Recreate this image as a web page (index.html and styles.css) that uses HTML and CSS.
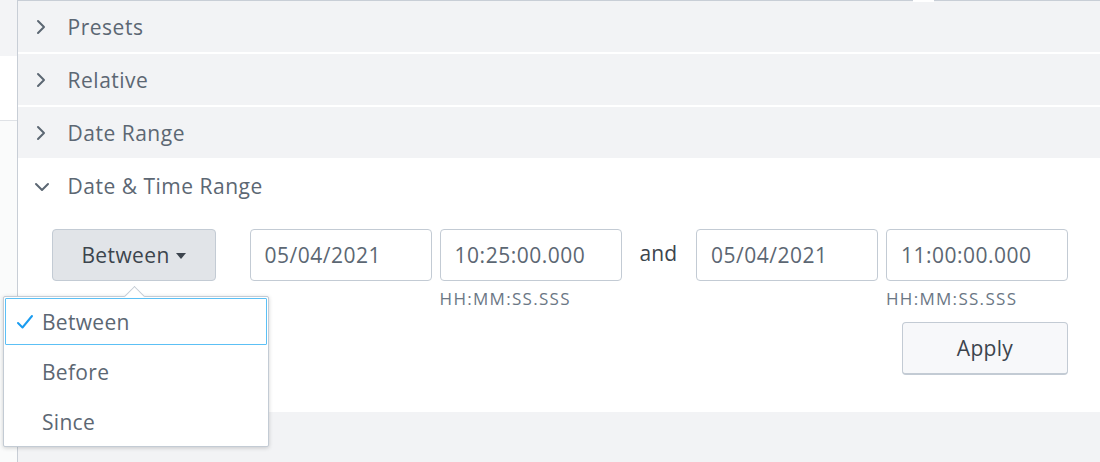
FILE: index.html
```html
<!DOCTYPE html>
<html>
<head>
<meta charset="utf-8">
<link rel="stylesheet" href="styles.css">
</head>
<body>
<div class="page">
  <div class="side">
    <div class="band band-gray"></div>
    <div class="band band-white"></div>
    <div class="band band-line"></div>
    <div class="band band-rest"></div>
  </div>
  <div class="panel">
    <div class="notch"></div>
    <div class="acc-row">
      <svg class="chev" width="12" height="16" viewBox="0 0 12 16"><path d="M3 2l6 6-6 6" fill="none" stroke="#5c6773" stroke-width="2" stroke-linecap="round" stroke-linejoin="round"/></svg>
      <span class="acc-label">Presets</span>
    </div>
    <div class="acc-row">
      <svg class="chev" width="12" height="16" viewBox="0 0 12 16"><path d="M3 2l6 6-6 6" fill="none" stroke="#5c6773" stroke-width="2" stroke-linecap="round" stroke-linejoin="round"/></svg>
      <span class="acc-label">Relative</span>
    </div>
    <div class="acc-row last">
      <svg class="chev" width="12" height="16" viewBox="0 0 12 16"><path d="M3 2l6 6-6 6" fill="none" stroke="#5c6773" stroke-width="2" stroke-linecap="round" stroke-linejoin="round"/></svg>
      <span class="acc-label">Date Range</span>
    </div>
    <div class="acc-open">
      <div class="acc-head">
        <svg class="chev down" width="16" height="12" viewBox="0 0 16 12"><path d="M2 3l6 6 6-6" fill="none" stroke="#5c6773" stroke-width="2" stroke-linecap="round" stroke-linejoin="round"/></svg>
        <span class="acc-label">Date &amp; Time Range</span>
      </div>
      <div class="acc-body">
        <div class="controls">
          <div class="select-btn">Between <span class="caret"></span></div>
          <div class="dt-group first">
            <div class="inputs">
              <div class="field">05/04/2021</div>
              <div class="field-col">
                <div class="field">10:25:00.000</div>
                <div class="help">HH:MM:SS.SSS</div>
              </div>
            </div>
          </div>
          <div class="and">and</div>
          <div class="dt-group">
            <div class="inputs">
              <div class="field">05/04/2021</div>
              <div class="field-col">
                <div class="field">11:00:00.000</div>
                <div class="help">HH:MM:SS.SSS</div>
              </div>
            </div>
          </div>
        </div>
        <div class="actions">
          <div class="apply">Apply</div>
        </div>
      </div>
    </div>
    <div class="acc-next"></div>
  </div>
</div>
<div class="menu">
  <div class="menu-arrow"></div>
  <div class="menu-item selected">
    <svg class="check" width="18" height="16" viewBox="0 0 18 16"><path d="M2 9l4.5 4.5L16 2" fill="none" stroke="#1a9cf0" stroke-width="2" stroke-linecap="round" stroke-linejoin="round"/></svg>
    <span>Between</span>
  </div>
  <div class="menu-item"><span>Before</span></div>
  <div class="menu-item"><span>Since</span></div>
</div>
</body>
</html>
```
FILE: styles.css
```css
* { box-sizing: border-box; }
html, body { margin: 0; padding: 0; }
body {
  width: 1100px;
  height: 462px;
  overflow: hidden;
  background: #ffffff;
  font-family: "Open Sans", "Liberation Sans", sans-serif;
  color: #5c6773;
  position: relative;
}
.page {
  display: flex;
  height: 462px;
}
.side {
  width: 17px;
  display: flex;
  flex-direction: column;
}
.band-gray { height: 56px; background: #f3f4f6; }
.band-white { height: 64px; background: #ffffff; }
.band-line { height: 1px; background: #dfe2e6; }
.band-rest { flex: 1; background: #fafbfb; }
.panel {
  flex: 1;
  border-left: 1px solid #c8ced6;
  border-top: 1px solid #c8ced6;
  position: relative;
  display: flex;
  flex-direction: column;
}
.notch {
  position: absolute;
  top: -1px;
  left: 895px;
  width: 21px;
  height: 2px;
  background: #ffffff;
}
.acc-row {
  height: 53px;
  background: #f2f3f5;
  border-bottom: 2px solid #ffffff;
  display: flex;
  align-items: center;
  padding-left: 17px;
  flex: none;
}
.acc-row.last { height: 51px; border-bottom: 0; }
.chev { flex: none; margin-right: 21px; }
.acc-label {
  font-size: 21px;
  color: #5c6773;
  letter-spacing: 0.5px;
}
.acc-open {
  background: #ffffff;
  height: 254px;
  flex: none;
}
.acc-head {
  height: 56px;
  display: flex;
  align-items: center;
  padding-left: 16px;
}
.acc-head .chev { margin-right: 18px; margin-top: 2px; }
.acc-body {
  padding: 15px 32px 0 34px;
}
.controls {
  display: flex;
  align-items: flex-start;
}
.select-btn {
  width: 164px;
  height: 52px;
  background: #e1e4e8;
  border: 1px solid #c3cbd4;
  border-radius: 4px;
  display: flex;
  align-items: center;
  justify-content: center;
  font-size: 21px;
  color: #3c444d;
  letter-spacing: 0.4px;
  margin-right: 34px;
}
.caret {
  display: inline-block;
  width: 0;
  height: 0;
  border-left: 5.5px solid transparent;
  border-right: 5.5px solid transparent;
  border-top: 6px solid #3c444d;
  margin-left: 6px;
  margin-top: 2px;
}
.inputs {
  display: flex;
  gap: 8px;
}
.field-col {
  display: flex;
  flex-direction: column;
}
.field {
  width: 182px;
  height: 52px;
  border: 1px solid #c3cbd4;
  border-radius: 4px;
  background: #ffffff;
  display: flex;
  align-items: center;
  padding-left: 14px;
  font-size: 21px;
  color: #5c6773;
  letter-spacing: 0.5px;
}
.help {
  font-size: 17px;
  color: #6b7785;
  margin-top: 6px;
  letter-spacing: 1.3px;
}
.and {
  height: 48px;
  display: flex;
  align-items: center;
  margin: 0 19px 0 18px;
  font-size: 21px;
  color: #3c444d;
}
.actions {
  display: flex;
  justify-content: flex-end;
  margin-top: 12px;
}
.apply {
  width: 166px;
  height: 53px;
  background: #f7f8fa;
  border: 1px solid #c3cbd4;
  border-bottom-width: 2px;
  border-radius: 4px;
  display: flex;
  align-items: center;
  justify-content: center;
  font-size: 21px;
  color: #3c444d;
  letter-spacing: 0.3px;
}
.acc-next {
  flex: 1;
  background: #f2f3f5;
}
.menu {
  position: absolute;
  left: 3px;
  top: 296px;
  width: 266px;
  height: 151px;
  background: #ffffff;
  border: 1px solid #c3cbd4;
  border-radius: 2px;
  box-shadow: 0 1px 4px rgba(0, 0, 0, 0.18);
  padding: 1px;
}
.menu-arrow {
  position: absolute;
  left: 123px;
  top: -8px;
  width: 15px;
  height: 15px;
  background: #ffffff;
  border-left: 1px solid #c3cbd4;
  border-top: 1px solid #c3cbd4;
  transform: rotate(45deg);
}
.menu-item {
  height: 50px;
  display: flex;
  align-items: center;
  padding-left: 37px;
  font-size: 21px;
  color: #5c6773;
  letter-spacing: 0.3px;
  position: relative;
}
.menu-item.selected {
  height: 47px;
  border: 1px solid #5cc0f5;
  border-radius: 1px;
  padding-left: 36px;
  margin-bottom: 2px;
  background: #ffffff;
}
.check {
  position: absolute;
  left: 10px;
  top: 15px;
}
```
